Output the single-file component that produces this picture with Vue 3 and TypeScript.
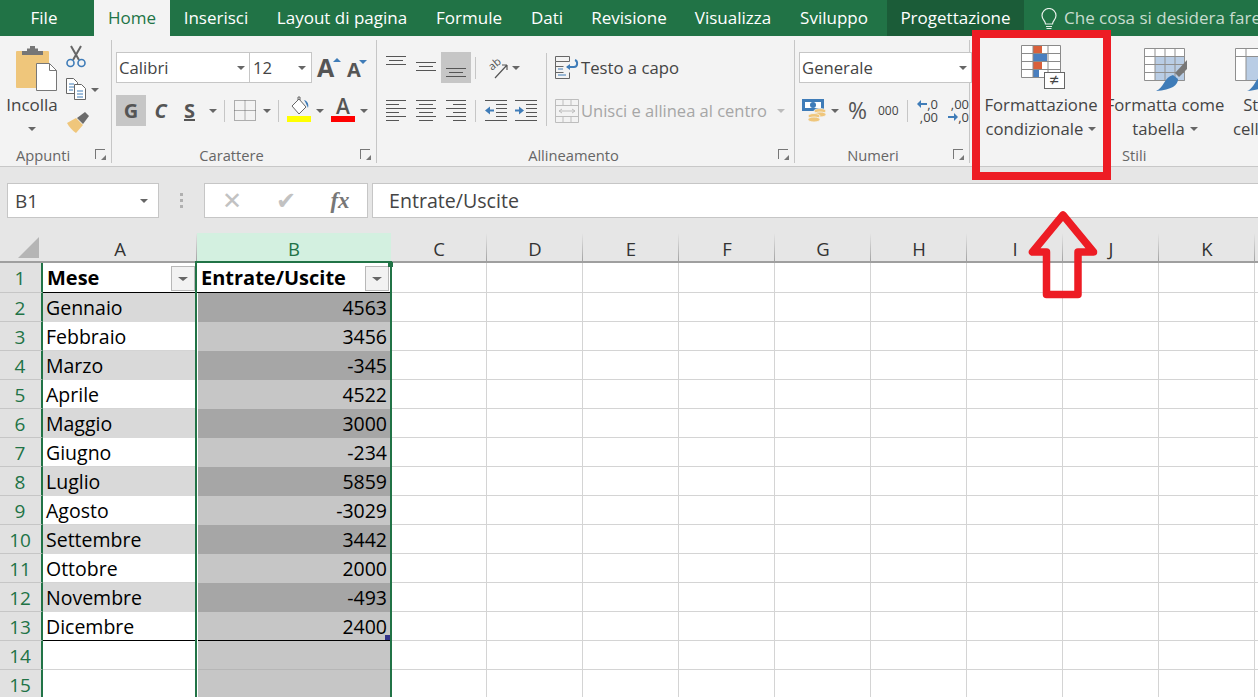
<script setup lang="ts">
const tabs = [
  { label: 'File', cls: 'tw-file' },
  { label: 'Home', cls: 'tw-home active' },
  { label: 'Inserisci', cls: 'tw-ins' },
  { label: 'Layout di pagina', cls: 'tw-lay' },
  { label: 'Formule', cls: 'tw-for' },
  { label: 'Dati', cls: 'tw-dat' },
  { label: 'Revisione', cls: 'tw-rev' },
  { label: 'Visualizza', cls: 'tw-vis' },
  { label: 'Sviluppo', cls: 'tw-svi' },
  { label: 'Progettazione', cls: 'tw-pro contextual' },
]
const columns = ['A', 'B', 'C', 'D', 'E', 'F', 'G', 'H', 'I', 'J', 'K', 'L']
const rows: [string, string][] = [
  ['Gennaio', '4563'], ['Febbraio', '3456'], ['Marzo', '-345'], ['Aprile', '4522'],
  ['Maggio', '3000'], ['Giugno', '-234'], ['Luglio', '5859'], ['Agosto', '-3029'],
  ['Settembre', '3442'], ['Ottobre', '2000'], ['Novembre', '-493'], ['Dicembre', '2400'],
  ['', ''], ['', ''],
]
const emptyCols = columns.slice(2)
</script>

<template>
  <div class="app">
    <nav class="tabs">
      <div v-for="t in tabs" :key="t.label" class="tab" :class="t.cls">{{ t.label }}</div>
      <div class="tell">
        <svg class="bulb" width="18" height="24" viewBox="0 0 18 24" fill="none" stroke="#e8f0ea" stroke-width="1.2">
          <path d="M5.500 16c0-3-3.500-4.500-3.500-8.500a7 7 0 0 1 14 0c0 4-3.500 5.500-3.500 8.500z" />
          <path d="M6 18.500h6M6.500 20.500h5M7.500 22.500h3" />
        </svg>
        <span>Che cosa si desidera fare</span>
      </div>
    </nav>

    <section class="ribbon">
      <div class="group g-app">
        <div class="g-body app-body">
          <div class="paste">
            <svg width="45" height="48" viewBox="0 0 45 48">
              <rect x="1" y="6" width="33" height="37" rx="1" fill="#efc67b" />
              <path d="M7 6h5V3.500h3V1h5v2.500h3V6h5v4H7z" fill="#767676" />
              <path d="M21.500 18.500h13l7 7v20h-20z" fill="#fff" stroke="#777" />
              <path d="M34.500 18.500v7h7" fill="none" stroke="#777" />
            </svg>
            <span class="paste-label">Incolla</span>
            <i class="caret paste-caret"></i>
          </div>
          <div class="clip-tools">
            <svg width="20" height="23" viewBox="0 0 20 23" fill="none">
              <path d="M5 1l8 14M15 1L7 15" stroke="#666" stroke-width="2" />
              <circle cx="4.500" cy="18" r="3.500" stroke="#3f7cb8" stroke-width="1.600" />
              <circle cx="15.500" cy="18" r="3.500" stroke="#3f7cb8" stroke-width="1.600" />
            </svg>
            <div class="copy-row">
              <svg width="20" height="22" viewBox="0 0 20 22" fill="#fff" stroke="#666">
                <path d="M.5.500h7l4 4v11H.5z" />
                <path d="M8.500 6.500h7l4 4v11h-11z" />
                <path d="M3 6h5M3 9h5M3 12h4M11 13h6M11 16h6M11 19h6" stroke="#3f7cb8" />
              </svg>
              <i class="caret copy-caret"></i>
            </div>
            <svg width="24" height="22" viewBox="0 0 24 22">
              <path d="M1 12l9-5 7 7-7 8C7 20 3 16 1 12z" fill="#efc67b" />
              <path d="M11 7l8-6 4 4-6 8z" fill="#6b6b6b" />
            </svg>
          </div>
        </div>
        <footer class="g-label l-app">Appunti<i class="launch"></i></footer>
      </div>

      <div class="group g-car">
        <div class="g-body">
          <div class="row r1 car-r1">
            <div class="field f-font">Calibri<i class="caret"></i></div>
            <div class="field f-size">12<i class="caret"></i></div>
            <span class="grow">A<i class="tri tri-up"></i></span>
            <span class="shrink">A<i class="tri tri-down"></i></span>
          </div>
          <div class="row r2 car-r2">
            <b class="fmt on">G</b>
            <b class="fmt it">C</b>
            <b class="fmt un">S</b>
            <i class="caret c-s"></i>
            <i class="vsep v1"></i>
            <svg class="i-border" width="22" height="21" viewBox="0 0 22 21" fill="none" stroke="#666" stroke-dasharray="1 1">
              <path d="M.5.500h21v20H.5zM11 .5v20M.5 10.500h21" />
            </svg>
            <i class="caret c-b"></i>
            <i class="vsep v2"></i>
            <svg class="i-fill" width="24" height="28" viewBox="0 0 24 28">
              <path d="M5 11l7-7 7 8-7 7z" fill="#fff" stroke="#666" />
              <path d="M11 5V2h2v3" fill="none" stroke="#666" />
              <path d="M17 5c4 1 5 5 4 8-1-2-2-5-4-8z" fill="#3f7cb8" />
              <rect y="21" width="24" height="6" fill="#ffff00" />
            </svg>
            <i class="caret c-f"></i>
            <span class="color-a">A</span>
            <i class="caret c-a"></i>
          </div>
        </div>
        <footer class="g-label l-car">Carattere<i class="launch"></i></footer>
      </div>

      <div class="group g-ali">
        <div class="g-body ali-body">
          <div class="ali-left">
            <div class="row r1 ali-r1">
              <svg class="al al-top" width="20" height="31" viewBox="0 0 20 31" stroke="#555"><path d="M0 4.500h20M3 8.500h14M0 12.500h20" /></svg>
              <svg class="al al-mid" width="20" height="31" viewBox="0 0 20 31" stroke="#555"><path d="M0 10.500h20M3 14.500h14M0 18.500h20" /></svg>
              <div class="al-on"><svg width="20" height="31" viewBox="0 0 20 31" stroke="#555"><path d="M0 16.500h20M3 20.500h14M0 24.500h20" /></svg></div>
              <i class="vsep v3"></i>
              <svg class="i-orient" width="22" height="22" viewBox="0 0 22 22" fill="none" stroke="#555">
                <text x="5" y="14" transform="rotate(-40 5 14)" font-size="11" fill="#555" stroke="none" font-family="Open Sans, sans-serif">ab</text>
                <path d="M8 21L20 8M20 8h-5M20 8v5" stroke-width="1.200" />
              </svg>
              <i class="caret c-o"></i>
            </div>
            <div class="row r2 ali-r2">
              <svg class="al" width="20" height="22" viewBox="0 0 20 22" stroke="#555"><path d="M0 .5h20M0 4.500h13M0 8.500h20M0 12.500h13M0 16.500h20M0 20.500h13" /></svg>
              <svg class="al al-gap" width="20" height="22" viewBox="0 0 20 22" stroke="#555"><path d="M0 .5h20M3 4.500h14M0 8.500h20M3 12.500h14M0 16.500h20M3 20.500h14" /></svg>
              <svg class="al al-gap" width="20" height="22" viewBox="0 0 20 22" stroke="#555"><path d="M0 .5h20M7 4.500h13M0 8.500h20M7 12.500h13M0 16.500h20M7 20.500h13" /></svg>
              <i class="vsep v3b"></i>
              <svg class="i-ind1" width="22" height="22" viewBox="0 0 22 22">
                <path d="M0 .5h22M11 4.500h11M11 8.500h11M11 12.500h11M11 16.500h11M0 20.500h22" stroke="#555" />
                <path d="M0 10.500l5-4v3h4v2H5v3z" fill="#3f7cb8" />
              </svg>
              <svg class="i-ind2" width="22" height="22" viewBox="0 0 22 22">
                <path d="M0 .5h22M11 4.500h11M11 8.500h11M11 12.500h11M11 16.500h11M0 20.500h22" stroke="#555" />
                <path d="M9 10.500l-5-4v3H0v2h4v3z" fill="#3f7cb8" />
              </svg>
            </div>
          </div>
          <i class="vsep v4"></i>
          <div class="ali-right">
            <div class="row r1 wrap-row">
              <svg width="24" height="23" viewBox="0 0 24 23" fill="none">
                <path d="M.5.500h14v5H.5zM.5 5.500v17h14v-6M.5 10.500h8M.5 16.500h8" stroke="#666" />
                <path d="M3 13h5M3 19h8" stroke="#3f7cb8" />
                <path d="M12 11h7c4 0 4-6 1-7" stroke="#3f7cb8" stroke-width="2" />
                <path d="M11 11l4-3v6z" fill="#3f7cb8" />
              </svg>
              <span>Testo a capo</span>
            </div>
            <div class="row r2 merge-row">
              <svg width="24" height="24" viewBox="0 0 24 24" fill="none" stroke="#bdbdbd">
                <path d="M.5.500h23v23H.5zM.5 6.500h23M.5 17.500h23M8 .5v6M16 .5v6M8 17.500v6M16 17.500v6" />
                <path d="M4 12h16M4 12l3-2M4 12l3 2M20 12l-3-2M20 12l-3 2" />
              </svg>
              <span>Unisci e allinea al centro</span>
              <i class="caret c-m"></i>
            </div>
          </div>
        </div>
        <footer class="g-label l-ali">Allineamento<i class="launch"></i></footer>
      </div>

      <div class="group g-num">
        <div class="g-body">
          <div class="row r1">
            <div class="field f-num">Generale<i class="caret"></i></div>
          </div>
          <div class="row r2 num-r2">
            <svg width="24" height="23" viewBox="0 0 24 23">
              <rect x="0" y="0" width="22" height="12" fill="#3f7cb8" />
              <rect x="3" y="3" width="16" height="6" fill="#fff" />
              <circle cx="11" cy="6" r="3" fill="#3f7cb8" />
              <ellipse cx="18" cy="12" rx="6" ry="2.500" fill="#efc67b" stroke="#f3f3f3" stroke-width=".8" />
              <ellipse cx="18" cy="15.500" rx="6" ry="2.500" fill="#efc67b" stroke="#f3f3f3" stroke-width=".8" />
              <ellipse cx="12" cy="17" rx="6" ry="2.500" fill="#efc67b" stroke="#f3f3f3" stroke-width=".8" />
              <ellipse cx="12" cy="20.500" rx="6" ry="2.500" fill="#efc67b" stroke="#f3f3f3" stroke-width=".8" />
            </svg>
            <i class="caret c-cur"></i>
            <span class="pct">%</span>
            <span class="mil">000</span>
            <i class="vsep v5"></i>
            <div class="dec dec1">
              <span class="dl"><svg width="10" height="10" viewBox="0 0 10 10"><path d="M0 5l4-4v3h6v2H4v3z" fill="#3f7cb8" /></svg>,0</span>
              <span class="dl">,00</span>
            </div>
            <div class="dec dec2">
              <span class="dl">,00</span>
              <span class="dl"><svg width="10" height="10" viewBox="0 0 10 10"><path d="M10 5L6 1v3H0v2h6v3z" fill="#3f7cb8" /></svg>,0</span>
            </div>
          </div>
        </div>
        <footer class="g-label l-num">Numeri<i class="launch"></i></footer>
      </div>

      <div class="group g-sti">
        <div class="g-body sti-body">
          <div class="big b-cond">
            <svg width="44" height="44" viewBox="0 0 44 44">
              <rect x=".5" y=".5" width="39" height="32" fill="#fff" />
              <rect x="12" y="1" width="9" height="7" fill="#d9603b" />
              <rect x="12" y="8.500" width="14" height="7.500" fill="#4a7fbf" />
              <rect x="12" y="16.500" width="9" height="7.500" fill="#d9603b" />
              <rect x="12" y="24.500" width="6" height="8" fill="#4a7fbf" />
              <path d="M.5.500h39v32H.5zM12 .5v32M27 .5v32M.5 8.500h39M.5 16.500h39M.5 24.500h39" fill="none" stroke="#8a8a8a" />
              <rect x="23.500" y="27.500" width="20" height="16" fill="#fff" stroke="#666" />
            </svg>
            <span class="neq">≠</span>
            <span class="big-line l1">Formattazione</span>
            <span class="big-line">condizionale<i class="caret c-big"></i></span>
          </div>
          <div class="big b-table">
            <svg width="44" height="44" viewBox="0 0 44 44">
              <rect x=".5" y=".5" width="40" height="32" fill="#fff" />
              <rect x="11" y="8" width="30" height="25" fill="#b9cde5" />
              <path d="M.5.500h40v32H.5zM11 .5v32M21 .5v32M31 .5v32M.5 8.500h40M.5 16.500h40M.5 24.500h40" fill="none" stroke="#8f8f8f" />
              <path d="M31 25L43 12v9l-8 8z" fill="#777" />
              <path d="M29 27l5 4c0 6-6 11-22 12 8-3 8-14 17-16z" fill="#3f7cb8" />
            </svg>
            <span class="big-line l1">Formatta come</span>
            <span class="big-line">tabella<i class="caret c-big"></i></span>
          </div>
          <div class="big b-cell">
            <svg width="44" height="44" viewBox="0 0 44 44">
              <rect x=".5" y=".5" width="40" height="32" fill="#fff" />
              <rect x="11" y="8" width="30" height="25" fill="#b9cde5" />
              <path d="M.5.500h40v32H.5zM11 .5v32M.5 8.500h40" fill="none" stroke="#8f8f8f" />
              <path d="M29 27l5 4c0 6-6 11-22 12 8-3 8-14 17-16z" fill="#3f7cb8" />
            </svg>
            <span class="big-line l1">Stili</span>
            <span class="big-line">cella<i class="caret c-big"></i></span>
          </div>
        </div>
        <footer class="g-label l-sti">Stili</footer>
      </div>
    </section>

    <section class="fbar">
      <div class="namebox">B1<i class="caret"></i></div>
      <div class="grip"><i></i><i></i><i></i></div>
      <div class="fnbox">
        <span class="x">✕</span>
        <span class="ok">✔</span>
        <span class="fx">fx</span>
      </div>
      <div class="finput">Entrate/Uscite</div>
    </section>

    <section class="sheet">
      <div class="corner"><i></i></div>
      <div v-for="c in columns" :key="c" class="ch" :class="{ 'ch-sel': c === 'B', 'ch-a': c === 'A' }">{{ c }}</div>

      <div class="rh">1</div>
      <div class="cell head">Mese<span class="filter"><i class="caret"></i></span></div>
      <div class="cell head">Entrate/Uscite<span class="filter"><i class="caret"></i></span></div>
      <div v-for="c in emptyCols" :key="'1' + c" class="cell"></div>

      <template v-for="(r, i) in rows" :key="i">
        <div class="rh">{{ i + 2 }}</div>
        <div class="cell a" :class="{ stripe: i < 12 && i % 2 === 0, last: i === 11 }">{{ r[0] }}</div>
        <div class="cell b" :class="{ dark: i < 12 && i % 2 === 0, last: i === 11, blank: i > 11 }">{{ r[1] }}</div>
        <div v-for="c in emptyCols" :key="i + c" class="cell"></div>
      </template>

      <div class="selection"><i class="handle"></i><i class="fill-handle"></i></div>
    </section>

    <div class="red-frame"></div>
    <svg class="red-arrow" width="80" height="95" viewBox="0 0 80 95" fill="none">
      <path d="M36 6 L5.500 43 H19.500 V85.500 H51 V43 H66.500 Z" stroke="#ed1c24" stroke-width="7.500" stroke-linejoin="round" />
    </svg>
  </div>
</template>

<style>
html, body { margin: 0; overflow: hidden; background: #fff; }
</style>

<style scoped>
.app {
  position: relative;
  width: 1258px;
  height: 697px;
  overflow: hidden;
  font-family: "Open Sans", "Noto Sans", sans-serif;
  color: #444;
  font-size: 16.700px;
}
i { display: block; font-style: normal; }

.tabs { display: flex; height: 36px; background: #217346; color: #fff; font-size: 17px; line-height: 36px; }
.tab { text-align: center; flex: none; white-space: nowrap; }
.tw-file { width: 88px; margin-right: 6px; }
.tw-home { width: 76px; }
.tw-ins { width: 92px; }
.tw-lay { width: 160px; }
.tw-for { width: 94px; }
.tw-dat { width: 62px; }
.tw-rev { width: 102px; }
.tw-vis { width: 106px; }
.tw-svi { width: 96px; margin-right: 5px; }
.tw-pro { width: 137px; }
.active { background: #f3f3f3; color: #217346; }
.contextual { background: #1b5c38; }
.tell { display: flex; align-items: center; gap: 6px; margin-left: 16px; color: #c8dccf; white-space: nowrap; }
.bulb { margin-top: 3px; flex: none; }

.ribbon { display: flex; height: 131px; background: #f3f3f3; border-bottom: 1px solid #c8c8c8; box-sizing: border-box; }
.group { flex: none; margin-top: 4px; height: 123px; box-sizing: border-box; border-right: 1px solid #c6c6c6; display: flex; flex-direction: column; }
.g-app { width: 112px; }
.g-car { width: 265px; padding-left: 4px; }
.g-ali { width: 418px; }
.g-num { width: 175px; padding-left: 4px; }
.g-sti { width: 400px; border-right: 0; }
.g-body { height: 105px; flex: none; padding-top: 12px; box-sizing: border-box; }
.g-label { position: relative; height: 18px; line-height: 20px; font-size: 14.700px; color: #666; text-align: center; flex: none; }
.launch { position: absolute; top: 4px; right: 6px; width: 9px; height: 9px; border-left: 1px solid #777; border-top: 1px solid #777; }
.launch::after { content: ""; position: absolute; right: -1px; bottom: -1px; border-style: solid; border-width: 0 0 5px 5px; border-color: transparent transparent #777 transparent; }
.l-app { text-align: left; padding-left: 16px; box-sizing: border-box; width: 111px; }
.l-car { margin-left: -4px; padding-right: 25px; }
.l-ali { padding-right: 24px; }
.l-num { margin-left: -4px; padding-right: 18px; }
.l-sti { text-align: left; padding-left: 152px; }

.row { display: flex; align-items: center; }
.r1 { height: 31px; }
.r2 { height: 31px; margin-top: 12px; }
.caret { width: 0; height: 0; border-style: solid; border-width: 4px 4px 0; border-color: #666 transparent transparent; flex: none; }
.vsep { width: 1px; background: #c6c6c6; flex: none; height: 22px; }
.tri { position: absolute; width: 0; height: 0; border-style: solid; border-color: transparent; }

.app-body { display: flex; padding-top: 5px; }
.paste { width: 63px; display: flex; flex-direction: column; flex: none; }
.paste svg { margin-left: 15px; flex: none; }
.paste-label { width: 64px; text-align: center; font-size: 17px; line-height: 22px; margin-top: 1px; }
.paste-caret { margin: 11px 0 0 28px; }
.clip-tools { display: flex; flex-direction: column; gap: 10px; margin-left: 3px; }
.clip-tools > svg:last-child { margin-top: 1px; }
.copy-row { display: flex; align-items: center; gap: 5px; }
.copy-caret { margin-top: 2px; }

.field { display: flex; align-items: center; justify-content: space-between; background: #fff; border: 1px solid #c6c6c6; box-sizing: border-box; height: 31px; font-size: 16.700px; padding: 0 4px 0 2px; }
.f-font { width: 134px; }
.f-size { width: 62px; padding: 0 5px 0 3px; border-left: 0; }
.f-num { width: 173px; flex: none; }
.grow, .shrink { position: relative; font-weight: 700; color: #555; line-height: 1; flex: none; }
.grow { font-size: 25px; margin-left: 5px; width: 30px; }
.shrink { font-size: 20px; width: 20px; margin-top: 4px; }
.grow .tri { top: 3px; left: 16px; border-width: 0 4px 4px; border-bottom-color: #3f7cb8; }
.shrink .tri { top: 0; left: 12px; border-width: 4px 4px 0; border-top-color: #3f7cb8; }

.fmt { width: 29px; height: 31px; text-align: center; line-height: 31px; font-size: 20px; color: #555; flex: none; }
.fmt.on { width: 30px; background: #c6c6c6; }
.fmt.it { font-style: italic; }
.fmt.un { text-decoration: underline; }
.c-s { margin-left: 5px; }
.v1 { margin-left: 7px; }
.i-border { margin-left: 9px; flex: none; }
.c-b { margin-left: 7px; }
.v2 { margin-left: 7px; }
.i-fill { margin-left: 8px; margin-top: -3px; flex: none; }
.c-f { margin-left: 5px; }
.color-a { width: 24px; margin-left: 7px; font-weight: 600; font-size: 21px; line-height: 22px; text-align: center; color: #555; border-bottom: 6px solid #ff0000; flex: none; height: 21px; margin-top: -4px; }
.c-a { margin-left: 5px; }

.ali-body { display: flex; padding-left: 9px; }
.ali-left { width: 160px; flex: none; }
.al { flex: none; }
.al-mid { margin-left: 10px; }
.al-on { width: 30px; height: 31px; background: #c6c6c6; margin-left: 5px; display: flex; justify-content: center; flex: none; }
.v3 { margin-left: 4px; }
.v3b { margin-left: 9px; }
.i-orient { margin-left: 11px; flex: none; }
.c-o { margin-left: 3px; }
.al-gap { margin-left: 10px; }
.i-ind1 { margin-left: 9px; flex: none; }
.i-ind2 { margin-left: 8px; flex: none; }
.v4 { height: 73px; margin-top: 1px; }
.ali-right { margin-left: 8px; }
.wrap-row { gap: 2px; font-size: 16.700px; white-space: nowrap; }
.merge-row { gap: 2px; font-size: 16.500px; color: #a6a6a6; white-space: nowrap; }
.merge-row .caret { border-top-color: #bbb; margin-left: 8px; }

.num-r2 { padding-left: 3px; }
.num-r2 > svg { flex: none; }
.c-cur { margin-left: 5px; }
.pct { font-size: 23px; margin-left: 9px; width: 22px; color: #555; line-height: 1; }
.mil { font-size: 12px; margin-left: 8px; width: 22px; }
.v5 { margin-left: 7px; }
.dec { font-size: 13px; line-height: 13px; display: flex; flex-direction: column; flex: none; width: 21px; }
.dl { display: flex; align-items: center; justify-content: flex-end; white-space: nowrap; }
.dec1 { margin-left: 9px; }
.dec2 { margin-left: 10px; }

.sti-body { display: flex; padding-top: 0; }
.big { position: relative; display: flex; flex-direction: column; align-items: center; flex: none; white-space: nowrap; font-size: 16.700px; }
.big svg { flex: none; }
.big-line { height: 24px; line-height: 24px; display: flex; align-items: center; }
.l1 { margin-top: 4px; }
.c-big { margin-left: 5px; }
.b-cond { width: 132px; margin-left: 5px; padding-top: 5px; }
.b-cond > svg { margin-left: 4px; }
.b-table { width: 120px; margin-left: -2px; padding-top: 8px; }
.b-table > svg { margin-left: 2px; }
.b-table .l1 { margin-top: 1px; }
.b-cell { width: 62px; margin-left: 1px; padding-top: 8px; }
.b-cell .l1 { margin-top: 1px; }
.neq { position: absolute; left: 69px; top: 32px; font-size: 17px; line-height: 16px; width: 20px; text-align: center; color: #444; }

.fbar { display: flex; height: 66px; background: #e6e6e6; padding-top: 16px; box-sizing: border-box; }
.fbar > div { height: 35px; box-sizing: border-box; }
.namebox { display: flex; align-items: center; justify-content: space-between; width: 152px; margin-left: 7px; background: #fff; border: 1px solid #c6c6c6; padding: 0 10px 0 7px; font-size: 19px; }
.grip { width: 45px; flex: none; display: flex; flex-direction: column; align-items: center; justify-content: center; gap: 3px; }
.grip i { width: 3px; height: 3px; background: #b0b0b0; }
.fnbox { width: 164px; display: flex; align-items: center; background: #fff; border: 1px solid #c6c6c6; }
.x, .ok { color: #c2c2c2; font-size: 24px; text-align: center; font-family: "DejaVu Sans", sans-serif; }
.x { width: 54px; }
.ok { width: 54px; }
.fx { width: 54px; text-align: center; color: #777; font: italic 700 23px "Liberation Serif", serif; }
.finput { flex: 1; margin-left: 4px; background: #fff; border: 1px solid #c6c6c6; border-right: 0; line-height: 33px; padding-left: 16px; font-size: 19.600px; }

.sheet { position: relative; display: grid; grid-template-columns: 43px 154px 194px repeat(10, 96px); grid-template-rows: 30px 30px; grid-auto-rows: 29px; background: #fff; }
.corner { background: #e6e6e6; position: relative; border-bottom: 2px solid #9f9f9f; box-sizing: border-box; }
.corner i { position: absolute; left: 18px; top: 4px; border-style: solid; border-width: 0 0 21px 21px; border-color: transparent transparent #b5b5b5 transparent; }
.ch { background: linear-gradient(#e6e6e6, #a3a3a3) right / 1px 100% no-repeat, #e6e6e6; border-bottom: 2px solid #9f9f9f; box-sizing: border-box; text-align: center; font-size: 18.500px; line-height: 32px; color: #333; }
.ch-sel { background: #d3f0e0; color: #217346; }
.rh { background: #e1e1e1; border-bottom: 1px solid #c6c6c6; border-right: 2px solid #217346; box-sizing: border-box; text-align: center; color: #217346; font-size: 19px; line-height: 30px; padding-right: 1px; }
.cell { border-right: 1px solid #d4d4d4; border-bottom: 1px solid #d4d4d4; box-sizing: border-box; font-size: 19.500px; line-height: 30px; color: #000; padding: 0 3px; white-space: nowrap; position: relative; }
.head { font-weight: 700; border-bottom-color: #000; border-right: 0; font-size: 20px; padding-left: 4px; }
.a { border-right: 0; margin-right: 2px; }
.stripe { background: #d9d9d9; border-bottom-color: #d9d9d9; }
.b { background: #c6c6c6; text-align: right; border-right: 0; border-bottom-color: #c6c6c6; padding-right: 4px; margin-left: 1px; }
.dark { background: #a6a6a6; border-bottom-color: #a6a6a6; }
.blank { border-bottom-color: #b6b6b6; }
.last { border-bottom-color: #000; }
.filter { position: absolute; right: 2px; top: 3px; width: 24px; height: 25px; box-sizing: border-box; background: #f2f2f2; border: 1px solid #b8b8b8; display: flex; align-items: center; justify-content: center; }
.filter .caret { border-width: 4px 5px 0; }

.selection { position: absolute; left: 195px; top: 28px; width: 197px; height: 440px; border: 2px solid #217346; box-sizing: border-box; pointer-events: none; }
.handle { position: absolute; right: -3px; top: -1px; width: 5px; height: 5px; background: #217346; }
.fill-handle { position: absolute; right: 0; top: 372px; width: 5px; height: 5px; background: #33338a; }

.red-frame { position: absolute; left: 972px; top: 30px; width: 139px; height: 150px; border: 8px solid #ed1c24; box-sizing: border-box; }
.red-arrow { position: absolute; left: 1027px; top: 209px; }
</style>
